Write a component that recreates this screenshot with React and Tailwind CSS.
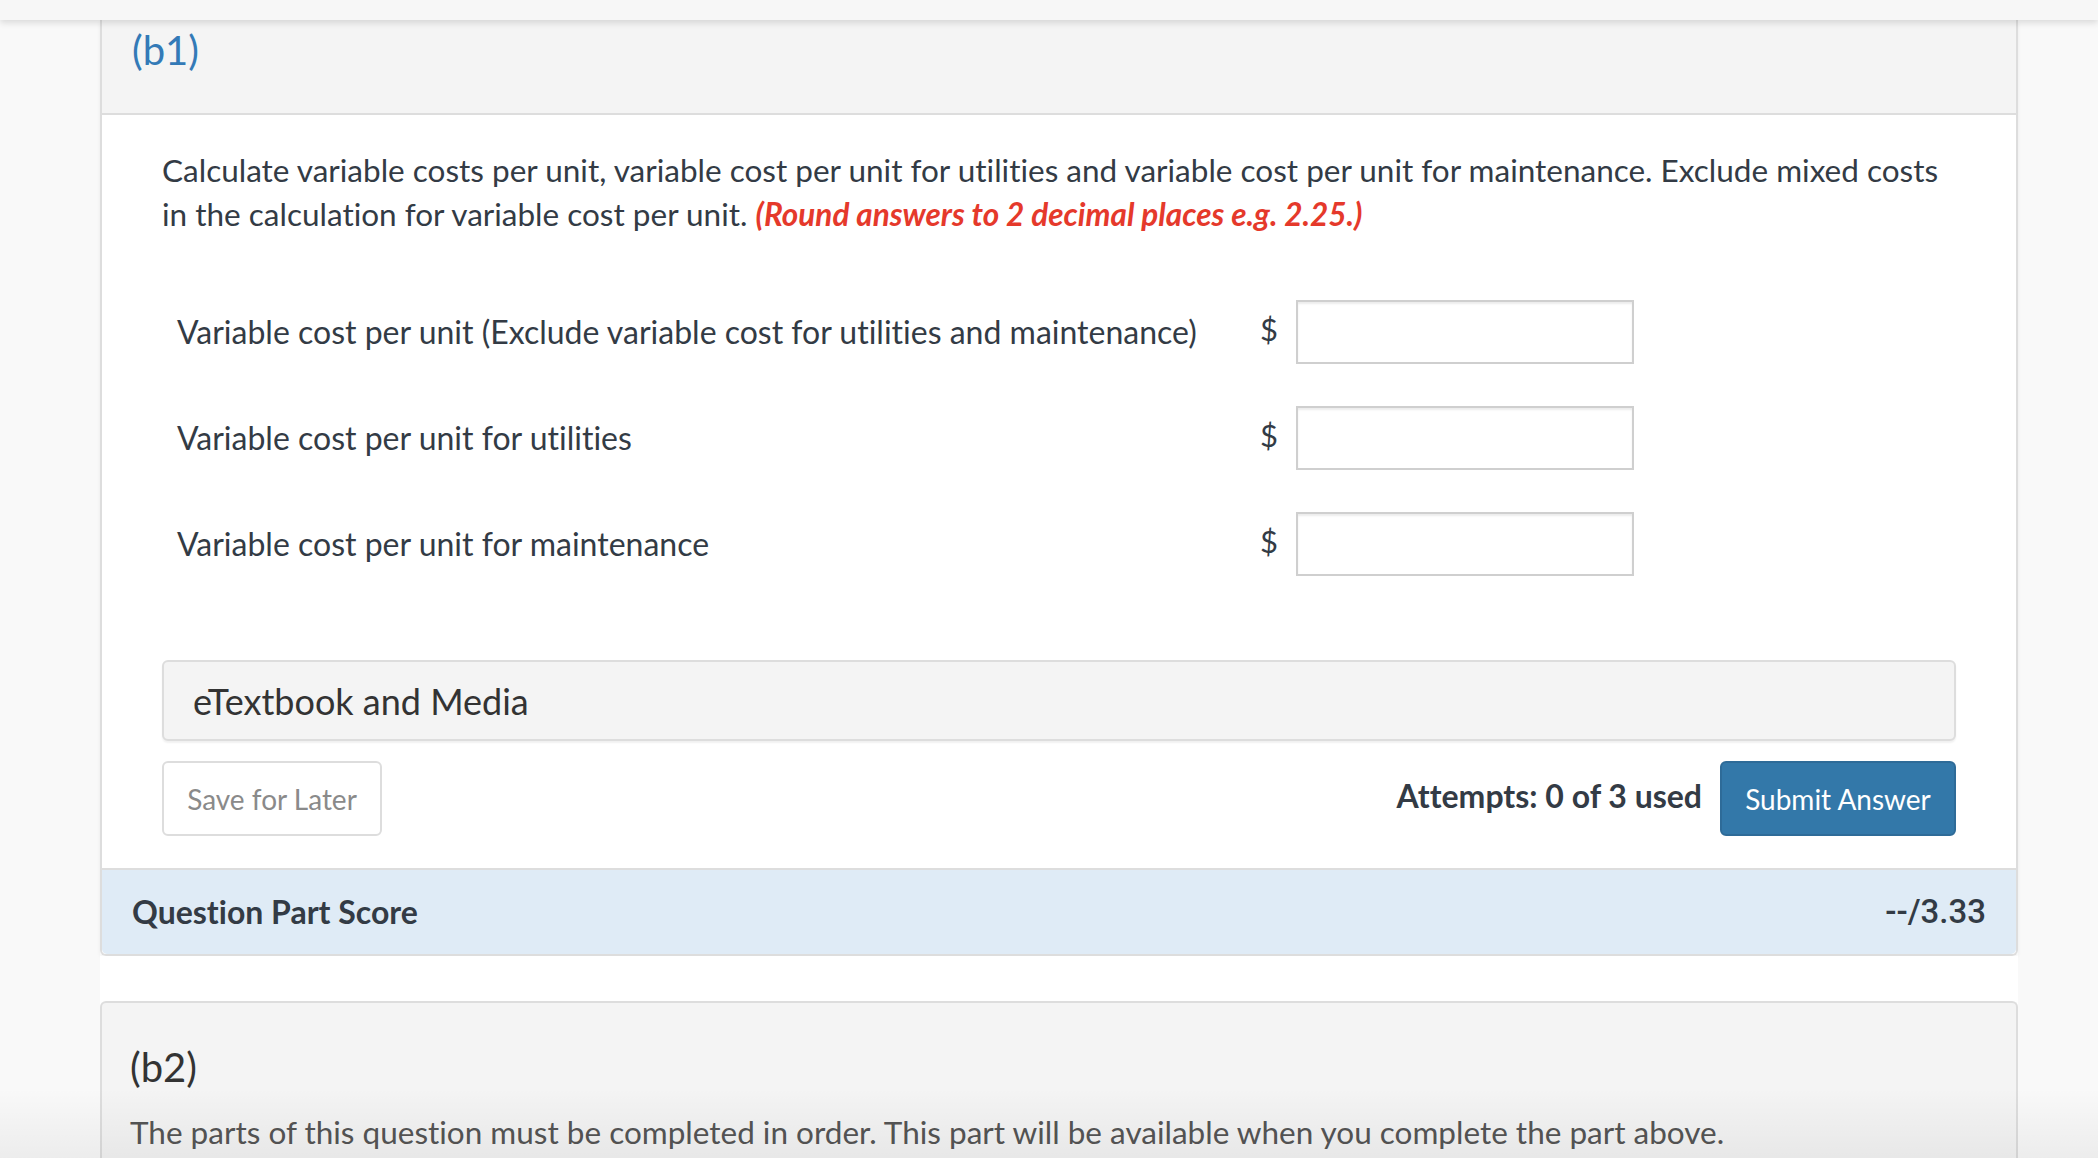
import React from "react";

const font = { fontFamily: "Lato, 'Open Sans', sans-serif" };

function Row({ label }) {
  return (
    <div className="flex items-center h-[64px] pl-[15px]">
      <span className="w-[1083px] text-[32px] text-[#333b45] leading-[1.5]">{label}</span>
      <span className="w-[36px] text-[31px] text-[#333b45] leading-none pb-[6px]">$</span>
      <input
        type="text"
        className="w-[338px] h-[64px] bg-white border-2 border-[#cfcfcf] shadow-[inset_0_2px_2px_rgba(0,0,0,0.08)] outline-none"
      />
    </div>
  );
}

export default function App() {
  return (
    <div className="relative w-[2098px] h-[1158px] overflow-hidden bg-[#f9f9f9] [font-variant-ligatures:no-common-ligatures]" style={font}>
      <div className="relative z-10 h-[20px] bg-[#f7f7f7] shadow-[0_3px_6px_rgba(0,0,0,0.12)]" />
      <div className="ml-[100px] w-[1918px] bg-white">
        {/* Panel 1 */}
        <div className="border-x-2 border-b-2 border-[#dddddd] rounded-b-[6px] shadow-[0_2px_4px_rgba(0,0,0,0.06)]">
          <div className="h-[95px] bg-[#f4f4f4] border-b-2 border-[#dddddd] px-[30px] pt-[6px]">
            <span className="text-[40px] leading-[1.2] text-[#337ab7]">(b1)</span>
          </div>
          <div className="bg-white px-[60px] pt-[33px] pb-[32px]">
            <p className="text-[31.5px] leading-[44px] text-[#333b45]">
              Calculate variable costs per unit, variable cost per unit for utilities and variable cost per unit for maintenance. Exclude mixed costs in the calculation for variable cost per unit.{" "}
              <span className="font-bold italic text-[#e5392b]">(Round answers to 2 decimal places e.g. 2.25.)</span>
            </p>
            <div className="mt-[64px] flex flex-col gap-[42px]">
              <Row label="Variable cost per unit (Exclude variable cost for utilities and maintenance)" />
              <Row label="Variable cost per unit for utilities" />
              <Row label="Variable cost per unit for maintenance" />
            </div>
            <div className="mt-[84px] h-[81px] flex items-center bg-[#f4f4f4] border-2 border-[#dddddd] rounded-[6px] shadow-[0_2px_2px_rgba(0,0,0,0.06)] pl-[29px]">
              <span className="text-[36px] text-[#333333]">eTextbook and Media</span>
            </div>
            <div className="mt-[20px] flex items-center justify-between">
              <button className="h-[75px] w-[220px] bg-white border-2 border-[#dddddd] rounded-[6px] text-[28px] text-[#8a8a8a]">
                Save for Later
              </button>
              <div className="flex items-center gap-[18px]">
                <span className="text-[32px] font-bold text-[#333b45] pb-[6px]">Attempts: 0 of 3 used</span>
                <button className="h-[75px] w-[236px] bg-[#3378a9] border-2 border-[#2e6b98] rounded-[6px] text-[28px] text-white">
                  Submit Answer
                </button>
              </div>
            </div>
          </div>
          <div className="h-[86px] bg-[#dfebf6] border-t-2 border-[#dddddd] rounded-b-[5px] px-[30px] flex items-center justify-between">
            <span className="text-[32px] font-bold text-[#333b45]">Question Part Score</span>
            <span className="text-[33px] font-medium text-[#333b45]" style={{ fontFamily: "Roboto, 'Liberation Sans', sans-serif" }}>--/3.33</span>
          </div>
        </div>
        <div className="h-[45px] bg-white" />
        {/* Panel 2 */}
        <div className="h-[200px] bg-[#f4f4f4] border-x-2 border-t-2 border-[#dddddd] rounded-t-[6px] px-[28px] pt-[40px]">
          <div className="text-[40px] leading-[1.2] text-[#333333]">(b2)</div>
          <div className="mt-[18px] text-[31.5px] leading-[1.5] text-[#555555]">
            The parts of this question must be completed in order. This part will be available when you complete the part above.
          </div>
        </div>
      </div>
      <div className="pointer-events-none absolute left-0 right-0 bottom-0 h-[70px] bg-gradient-to-b from-transparent to-[rgba(0,0,0,0.05)]" />
    </div>
  );
}
